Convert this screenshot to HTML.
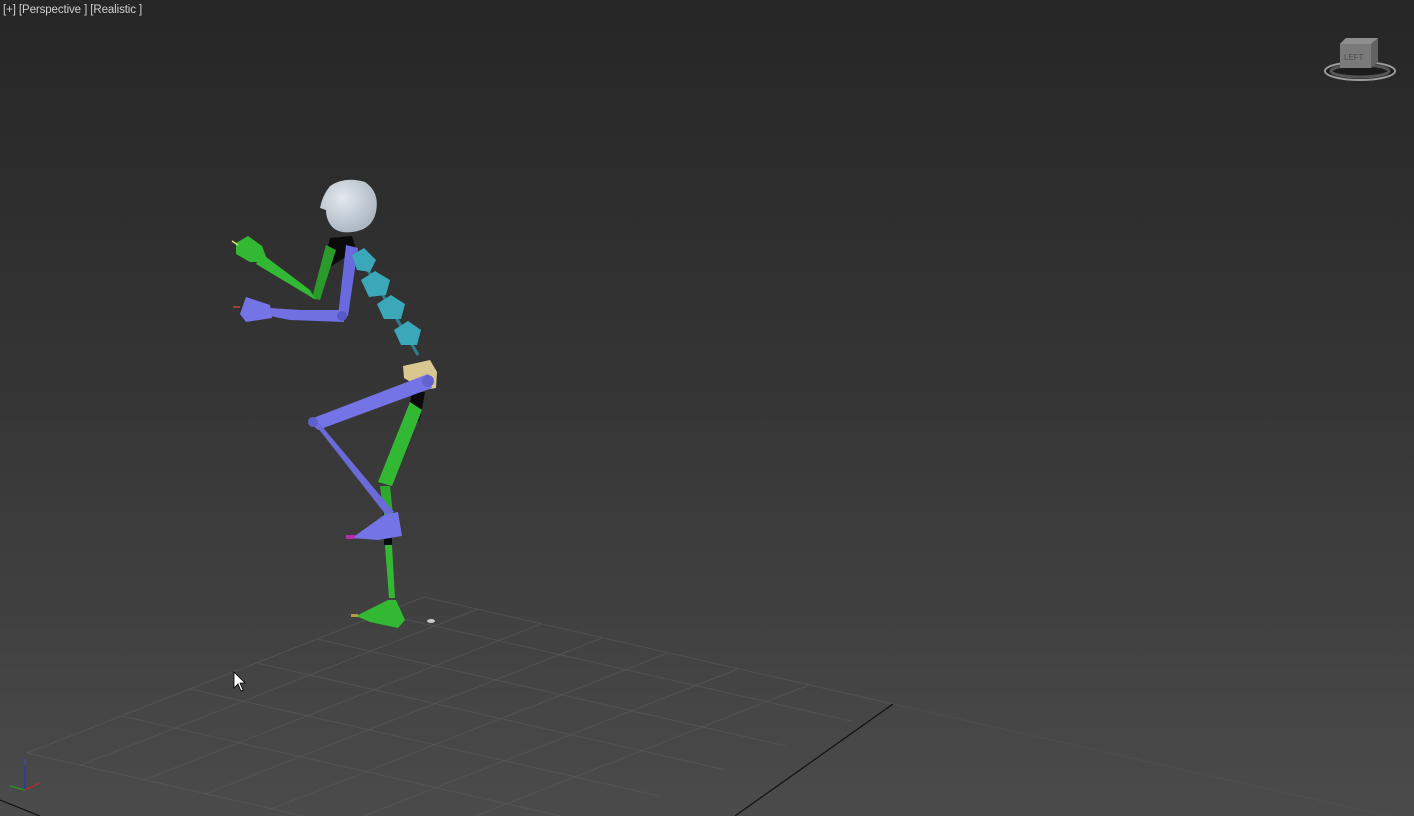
<!DOCTYPE html>
<html><head><style>
html,body{margin:0;padding:0;width:1414px;height:816px;overflow:hidden;background:#2a2a2a}
svg{display:block}
.lbl{position:absolute;left:3px;top:4px;font:11.5px "Liberation Sans",sans-serif;color:#d0d0d0;letter-spacing:-0.1px}
</style></head><body>
<svg width="1414" height="816" style="position:absolute;left:0;top:0">
<defs>
<linearGradient id="bg" x1="0" y1="0" x2="0" y2="1">
<stop offset="0" stop-color="#262626"/><stop offset="0.5" stop-color="#363636"/><stop offset="1" stop-color="#4b4b4b"/>
</linearGradient>
<radialGradient id="hd" cx="0.4" cy="0.35" r="0.7"><stop offset="0" stop-color="#e2e8ee"/><stop offset="1" stop-color="#a9b4c0"/></radialGradient>
</defs>
<rect width="1414" height="816" fill="url(#bg)"/>
<g stroke="#5c5c5c" stroke-opacity="0.55" stroke-width="1" fill="none">
<line x1="424" y1="597" x2="893" y2="704"/>
<line x1="382" y1="614" x2="851" y2="721"/>
<line x1="317" y1="639" x2="786" y2="746"/>
<line x1="257" y1="663" x2="726" y2="770"/>
<line x1="190" y1="689" x2="659" y2="796"/>
<line x1="122" y1="716" x2="591" y2="823"/>
<line x1="27" y1="753" x2="496" y2="860"/>
<line x1="424" y1="597" x2="27" y2="753"/>
<line x1="478" y1="609" x2="81" y2="765"/>
<line x1="541" y1="624" x2="144" y2="780"/>
<line x1="602" y1="638" x2="205" y2="794"/>
<line x1="668" y1="653" x2="271" y2="809"/>
<line x1="738" y1="669" x2="341" y2="825"/>
<line x1="809" y1="685" x2="412" y2="841"/>
<line x1="893" y1="704" x2="1414" y2="822" stroke-opacity="0.35"/>
</g>
<line x1="893" y1="704" x2="735" y2="816" stroke="#111" stroke-width="1.2"/>
<line x1="0" y1="800" x2="40" y2="816" stroke="#111" stroke-width="1.2"/>
<line x1="25" y1="766" x2="25" y2="790" stroke="#2b3bb0" stroke-width="1.5"/>
<text x="23" y="764" font-family="Liberation Sans" font-size="8" fill="#3a4ad0">z</text>
<line x1="25" y1="790" x2="10" y2="786" stroke="#2d8a2d" stroke-width="1.5"/>
<line x1="25" y1="790" x2="40" y2="783" stroke="#a83030" stroke-width="1.5"/>
<g stroke="none">
<polygon points="330,238 352,236 356,250 338,262 322,272" fill="#0a0a0a"/>
<polygon points="412,392 425,392 420,420 405,430" fill="#0a0a0a"/>
<polygon points="383,505 392,505 392,545 384,545" fill="#0a0a0a"/>
<polygon points="326,245 336,250 320,300 312,298" fill="#2a9a2a"/>
<polygon points="316,300 310,290 262,254 256,264" fill="#33b833"/>
<polygon points="236,243 248,236 262,246 268,262 250,262 236,254" fill="#33b833"/>
<polygon points="346,245 358,248 348,316 338,316" fill="#6a6ae0"/>
<polygon points="344,310 344,322 290,320 270,316 270,308 300,310" fill="#7070e0"/>
<circle cx="342" cy="316" r="5" fill="#5858c8"/>
<polygon points="246,297 270,305 272,318 246,322 240,314" fill="#7474e6"/>
<path d="M330,186 Q345,176 365,182 Q380,192 376,212 Q372,230 352,232 Q336,234 330,224 Q326,218 326,210 L320,208 Q322,196 330,186 Z" fill="url(#hd)"/>
<g stroke="#2a8090" stroke-width="3"><line x1="365" y1="265" x2="418" y2="355"/></g>
<g fill="#3aa8b8">
<polygon points="352,255 364,248 376,260 370,272 357,270"/>
<polygon points="361,280 375,271 390,280 386,295 369,297"/>
<polygon points="377,304 391,295 405,304 401,319 384,319"/>
<polygon points="394,330 408,321 421,330 417,345 401,345"/>
</g>
<polygon points="410,402 422,410 392,486 378,482" fill="#33b833"/>
<polygon points="380,486 390,486 393,515 384,515" fill="#2fa82f"/>
<polygon points="385,545 392,545 395,598 389,598" fill="#33b833"/>
<polygon points="388,600 396,600 405,620 398,628 370,622 356,616" fill="#33b833"/>
<polygon points="403,366 430,360 437,372 436,388 424,390 404,378" fill="#d8c890"/>
<polygon points="428,374 432,388 318,430 308,420" fill="#7474e6"/>
<circle cx="428" cy="381" r="6" fill="#6464d0"/>
<polygon points="310,418 320,424 394,512 386,515" fill="#6a6ad8"/>
<circle cx="313" cy="422" r="5" fill="#6060cc"/>
<polygon points="384,515 398,512 402,536 378,540 352,538" fill="#7474e6"/>
<rect x="346" y="535" width="9" height="4" fill="#b030b0"/>
<rect x="351" y="614" width="7" height="3" fill="#b0a040"/>
<line x1="232" y1="241" x2="238" y2="245" stroke="#e0e080" stroke-width="1.5"/>
<line x1="233" y1="307" x2="240" y2="307" stroke="#c04040" stroke-width="1.5"/>
<ellipse cx="431" cy="621" rx="4" ry="2" fill="#c8c8c8"/>
</g>
<ellipse cx="1360" cy="71" rx="35" ry="9" fill="#1c1c1c" stroke="#9a9a9a" stroke-width="2"/>
<ellipse cx="1360" cy="71" rx="29" ry="6" fill="none" stroke="#555" stroke-width="3"/>
<polygon points="1340,44 1346,38 1378,38 1378,62 1371,68 1340,68" fill="#7a7a7a"/>
<polygon points="1346,38 1378,38 1371,44 1340,44" fill="#8e8e8e"/>
<polygon points="1371,44 1378,38 1378,62 1371,68" fill="#626262"/>
<text x="1344" y="60" font-family="Liberation Sans" font-size="8" fill="#4a4a4a">LEFT</text>
<polygon points="234,672 234,688 238,684 241,691 243,690 240,683 245,683" fill="#fff" stroke="#000" stroke-width="0.8"/>
</svg>
<div class="lbl">[+] [Perspective ] [Realistic ]</div>
</body></html>
